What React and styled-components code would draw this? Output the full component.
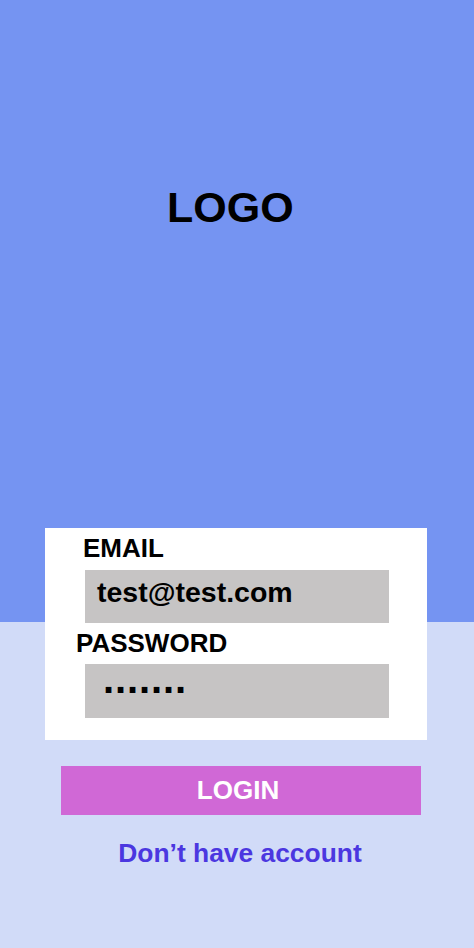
import React from "react";
import styled, { createGlobalStyle } from "styled-components";

const GlobalStyle = createGlobalStyle`
  html, body {
    margin: 0;
    padding: 0;
  }
  body {
    font-family: "Liberation Sans", Arial, sans-serif;
  }
`;

const Page = styled.div`
  min-height: 948px;
  display: flex;
  flex-direction: column;
  align-items: flex-start;
  background: linear-gradient(#7594f2 0, #7594f2 622px, #d1dbf8 622px, #d1dbf8 100%);
`;

const Logo = styled.h1`
  margin: 186px 0 0 167px;
  font-size: 43px;
  line-height: 43px;
  font-weight: 700;
  color: #000;
`;

const Card = styled.form`
  margin: 299px 0 0 45px;
  width: 382px;
  box-sizing: border-box;
  background: #fff;
  padding: 7px 0 22px 40px;
  display: flex;
  flex-direction: column;
  align-items: flex-start;
`;

const Label = styled.label`
  margin-left: ${(p) => p.$indent}px;
  margin-top: ${(p) => p.$top || 0}px;
  font-size: 26px;
  line-height: 26px;
  font-weight: 700;
  color: #000;
`;

const Field = styled.div`
  margin-top: ${(p) => p.$top}px;
  width: 304px;
  height: ${(p) => p.$height}px;
  box-sizing: border-box;
  background: #c6c4c4;
  color: #000;
  font-weight: 700;
  white-space: nowrap;
`;

const EmailValue = styled.span`
  display: block;
  padding: 8px 0 0 12px;
  font-size: 28.5px;
  line-height: 28px;
`;

const Dots = styled.span`
  display: block;
  padding: 0 0 0 18px;
  font-size: 40px;
  line-height: 30px;
  letter-spacing: 0.9px;
`;

const LoginButton = styled.button`
  margin: 26px 0 0 61px;
  width: 360px;
  height: 49px;
  border: none;
  padding: 0 6px 0 0;
  background: #d068d6;
  color: #fff;
  font-family: inherit;
  font-size: 26px;
  line-height: 49px;
  font-weight: 700;
  cursor: pointer;
`;

const SignupLink = styled.a`
  align-self: center;
  margin: 25px 0 0 6px;
  font-size: 26.4px;
  line-height: 26px;
  font-weight: 700;
  color: #4b37e0;
  text-decoration: none;
  cursor: pointer;
`;

export default function App() {
  return (
    <>
      <GlobalStyle />
      <Page>
        <Logo>LOGO</Logo>
        <Card onSubmit={(e) => e.preventDefault()}>
          <Label $indent={-2}>EMAIL</Label>
          <Field $top={9} $height={53}>
            <EmailValue>test@test.com</EmailValue>
          </Field>
          <Label $indent={-9} $top={7}>PASSWORD</Label>
          <Field $top={8} $height={54}>
            <Dots>.......</Dots>
          </Field>
        </Card>
        <LoginButton type="button">LOGIN</LoginButton>
        <SignupLink>Don’t have account</SignupLink>
      </Page>
    </>
  );
}
